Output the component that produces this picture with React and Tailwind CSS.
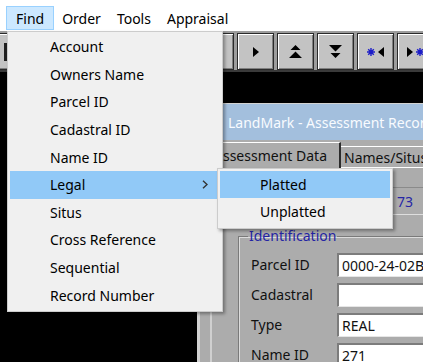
import React from "react";

const findItems = [
  "Account",
  "Owners Name",
  "Parcel ID",
  "Cadastral ID",
  "Name ID",
  "Legal",
  "Situs",
  "Cross Reference",
  "Sequential",
  "Record Number",
];

const fields = [
  { label: "Parcel ID", value: "0000-24-02B-001-00" },
  { label: "Cadastral", value: "" },
  { label: "Type", value: "REAL" },
  { label: "Name ID", value: "271" },
];

// toolbar glyphs
const Tri = ({ dir = "right" }) => (
  <svg width="6" height="10" viewBox="0 0 6 10">
    <path d={dir === "right" ? "M0 0L6 5L0 10Z" : "M6 0L0 5L6 10Z"} fill="#000" />
  </svg>
);

const Star = () => (
  <svg width="8" height="8" viewBox="0 0 8 8" stroke="#1c1cc8" strokeWidth="1.4">
    <path d="M4 0V8M0 4H8M1.2 1.2L6.8 6.8M6.8 1.2L1.2 6.8" />
  </svg>
);

const DoubleArrow = ({ up }) => (
  <svg width="13" height="13" viewBox="0 0 13 13">
    <path
      d={up ? "M6.5 0L11.5 5H1.5Z M6.5 6.5L13 13H0Z" : "M1.5 8H11.5L6.5 13Z M0 0H13L6.5 6.5Z"}
      fill="#000"
    />
  </svg>
);

function ToolButton({ children }) {
  return (
    <div className="w-[37px] h-[37px] shrink-0 border border-[#2a2a2a] bg-[#c3c3c3] shadow-[inset_1px_1px_0_#ffffff,inset_-1px_-1px_0_#7f7f7f] flex items-center justify-center gap-[3px]">
      {children}
    </div>
  );
}

function Toolbar() {
  const icons = [
    <div key="a" className="w-[3px] h-[18px] bg-[#202020] mr-[20px]" />,
    <Tri key="b" dir="left" />,
    <Tri key="c" />,
    <DoubleArrow key="d" up />,
    <DoubleArrow key="e" />,
    <Tri key="f" dir="left" />,
    <Tri key="g" />,
    <DoubleArrow key="h" up />,
    <DoubleArrow key="i" />,
    <>
      <Star />
      <Tri dir="left" />
    </>,
    <>
      <Tri />
      <Star />
    </>,
  ];
  return (
    <div className="h-[41px] bg-[#9c9c9c] border-b-2 border-[#3a3a3a] pt-[2px] flex gap-[3px] -ml-[3px]">
      {icons.map((ic, i) => (
        <ToolButton key={i}>{ic}</ToolButton>
      ))}
    </div>
  );
}

function MenuBar() {
  return (
    <div className="h-[31px] bg-white flex items-start pl-[6px] pt-[6px]">
      <div className="h-[24px] px-[9px] flex items-center bg-[#cce8ff] border border-[#99d1ff]">Find</div>
      {["Order", "Tools", "Appraisal"].map((m) => (
        <div key={m} className="h-[24px] px-[7px] flex items-center border border-transparent">
          {m}
        </div>
      ))}
    </div>
  );
}

function AppWindow() {
  return (
    <div className="h-[259px] bg-[#acacac] border-t border-l-[3px] border-[#d2d2d2]">
      <div className="h-[36px] bg-[#a3bfdd] flex items-center pl-[28px] text-[#f8fbff] whitespace-nowrap">
        LandMark - Assessment Records
      </div>
      <div className="ml-[10px] h-full border-l-2 border-[#d0d0d0] pt-[2px] text-[#111]">
        {/* tabs */}
        <div className="h-[26px] flex items-end whitespace-nowrap">
          <div className="h-[26px] w-[133px] shrink-0 -ml-[4px] border-t border-l border-white border-r-2 border-r-[#2c2c2c] flex items-center pl-[5px]">
            Assessment Data
          </div>
          <div className="h-[22px] shrink-0 border-t border-b border-white flex items-center pl-[3px] pr-[8px]">
            Names/Situs
          </div>
          <div className="flex-1 border-b border-white" />
        </div>
        <div className="h-[19px]" />
        <div className="h-[28px] border-t border-[#8a8a8a] border-b border-b-[#dedede] flex items-center pl-[185px] text-[#2626a6]">
          73
        </div>
        <fieldset className="mt-[11px] ml-[26px] w-[320px] border border-[#7a7a7a] shadow-[inset_1px_1px_0_#dcdcdc] pt-[7px]">
          <legend className="ml-[9px] px-[1px] leading-[20px] text-[#2424a4]">Identification</legend>
          <div className="flex flex-col gap-[6px]">
            {fields.map((f) => (
              <div key={f.label} className="flex items-center h-[24px]">
                <div className="w-[98px] shrink-0 pl-[12px] -mt-[2px]">{f.label}</div>
                <div className="flex-1 h-[24px] bg-white border-t-2 border-l-2 border-[#7c7c7c] border-b border-r border-b-[#e6e6e6] border-r-[#e6e6e6] flex items-center pl-[3px] whitespace-nowrap overflow-hidden">
                  {f.value}
                </div>
              </div>
            ))}
          </div>
        </fieldset>
      </div>
    </div>
  );
}

function FindMenu() {
  return (
    <div className="absolute left-[7px] top-[31px] w-[216px] h-[281px] bg-[#f0f0f0] border border-[#cccccc] pl-[2px] pr-[5px] pt-[1px] shadow-[2px_2px_3px_rgba(0,0,0,0.35)]">
      {findItems.map((it) => (
        <div
          key={it}
          className={
            "h-[27.6px] flex items-center justify-between pl-[40px] pr-[9px] " +
            (it === "Legal" ? "bg-[#91c9f7]" : "")
          }
        >
          <span>{it}</span>
          {it === "Legal" && (
            <svg width="6" height="9" viewBox="0 0 6 9">
              <path d="M1 0.8L5 4.5L1 8.2" fill="none" stroke="#333" strokeWidth="1.4" />
            </svg>
          )}
        </div>
      ))}
    </div>
  );
}

function LegalMenu() {
  return (
    <div className="absolute left-[217px] top-[168px] w-[176px] h-[61px] bg-[#f0f0f0] border border-[#cccccc] p-[2px] shadow-[2px_2px_3px_rgba(0,0,0,0.35)]">
      <div className="h-[27px] flex items-center pl-[40px] bg-[#91c9f7]">Platted</div>
      <div className="h-[27px] flex items-center pl-[40px]">Unplatted</div>
    </div>
  );
}

export default function App() {
  return (
    <div className="relative w-[423px] h-[362px] overflow-hidden bg-black font-['Noto_Sans',sans-serif] text-[14px] text-black">
      <MenuBar />
      <Toolbar />
      <div className="pl-[197px] pt-[31px]">
        <AppWindow />
      </div>
      <FindMenu />
      <LegalMenu />
    </div>
  );
}
